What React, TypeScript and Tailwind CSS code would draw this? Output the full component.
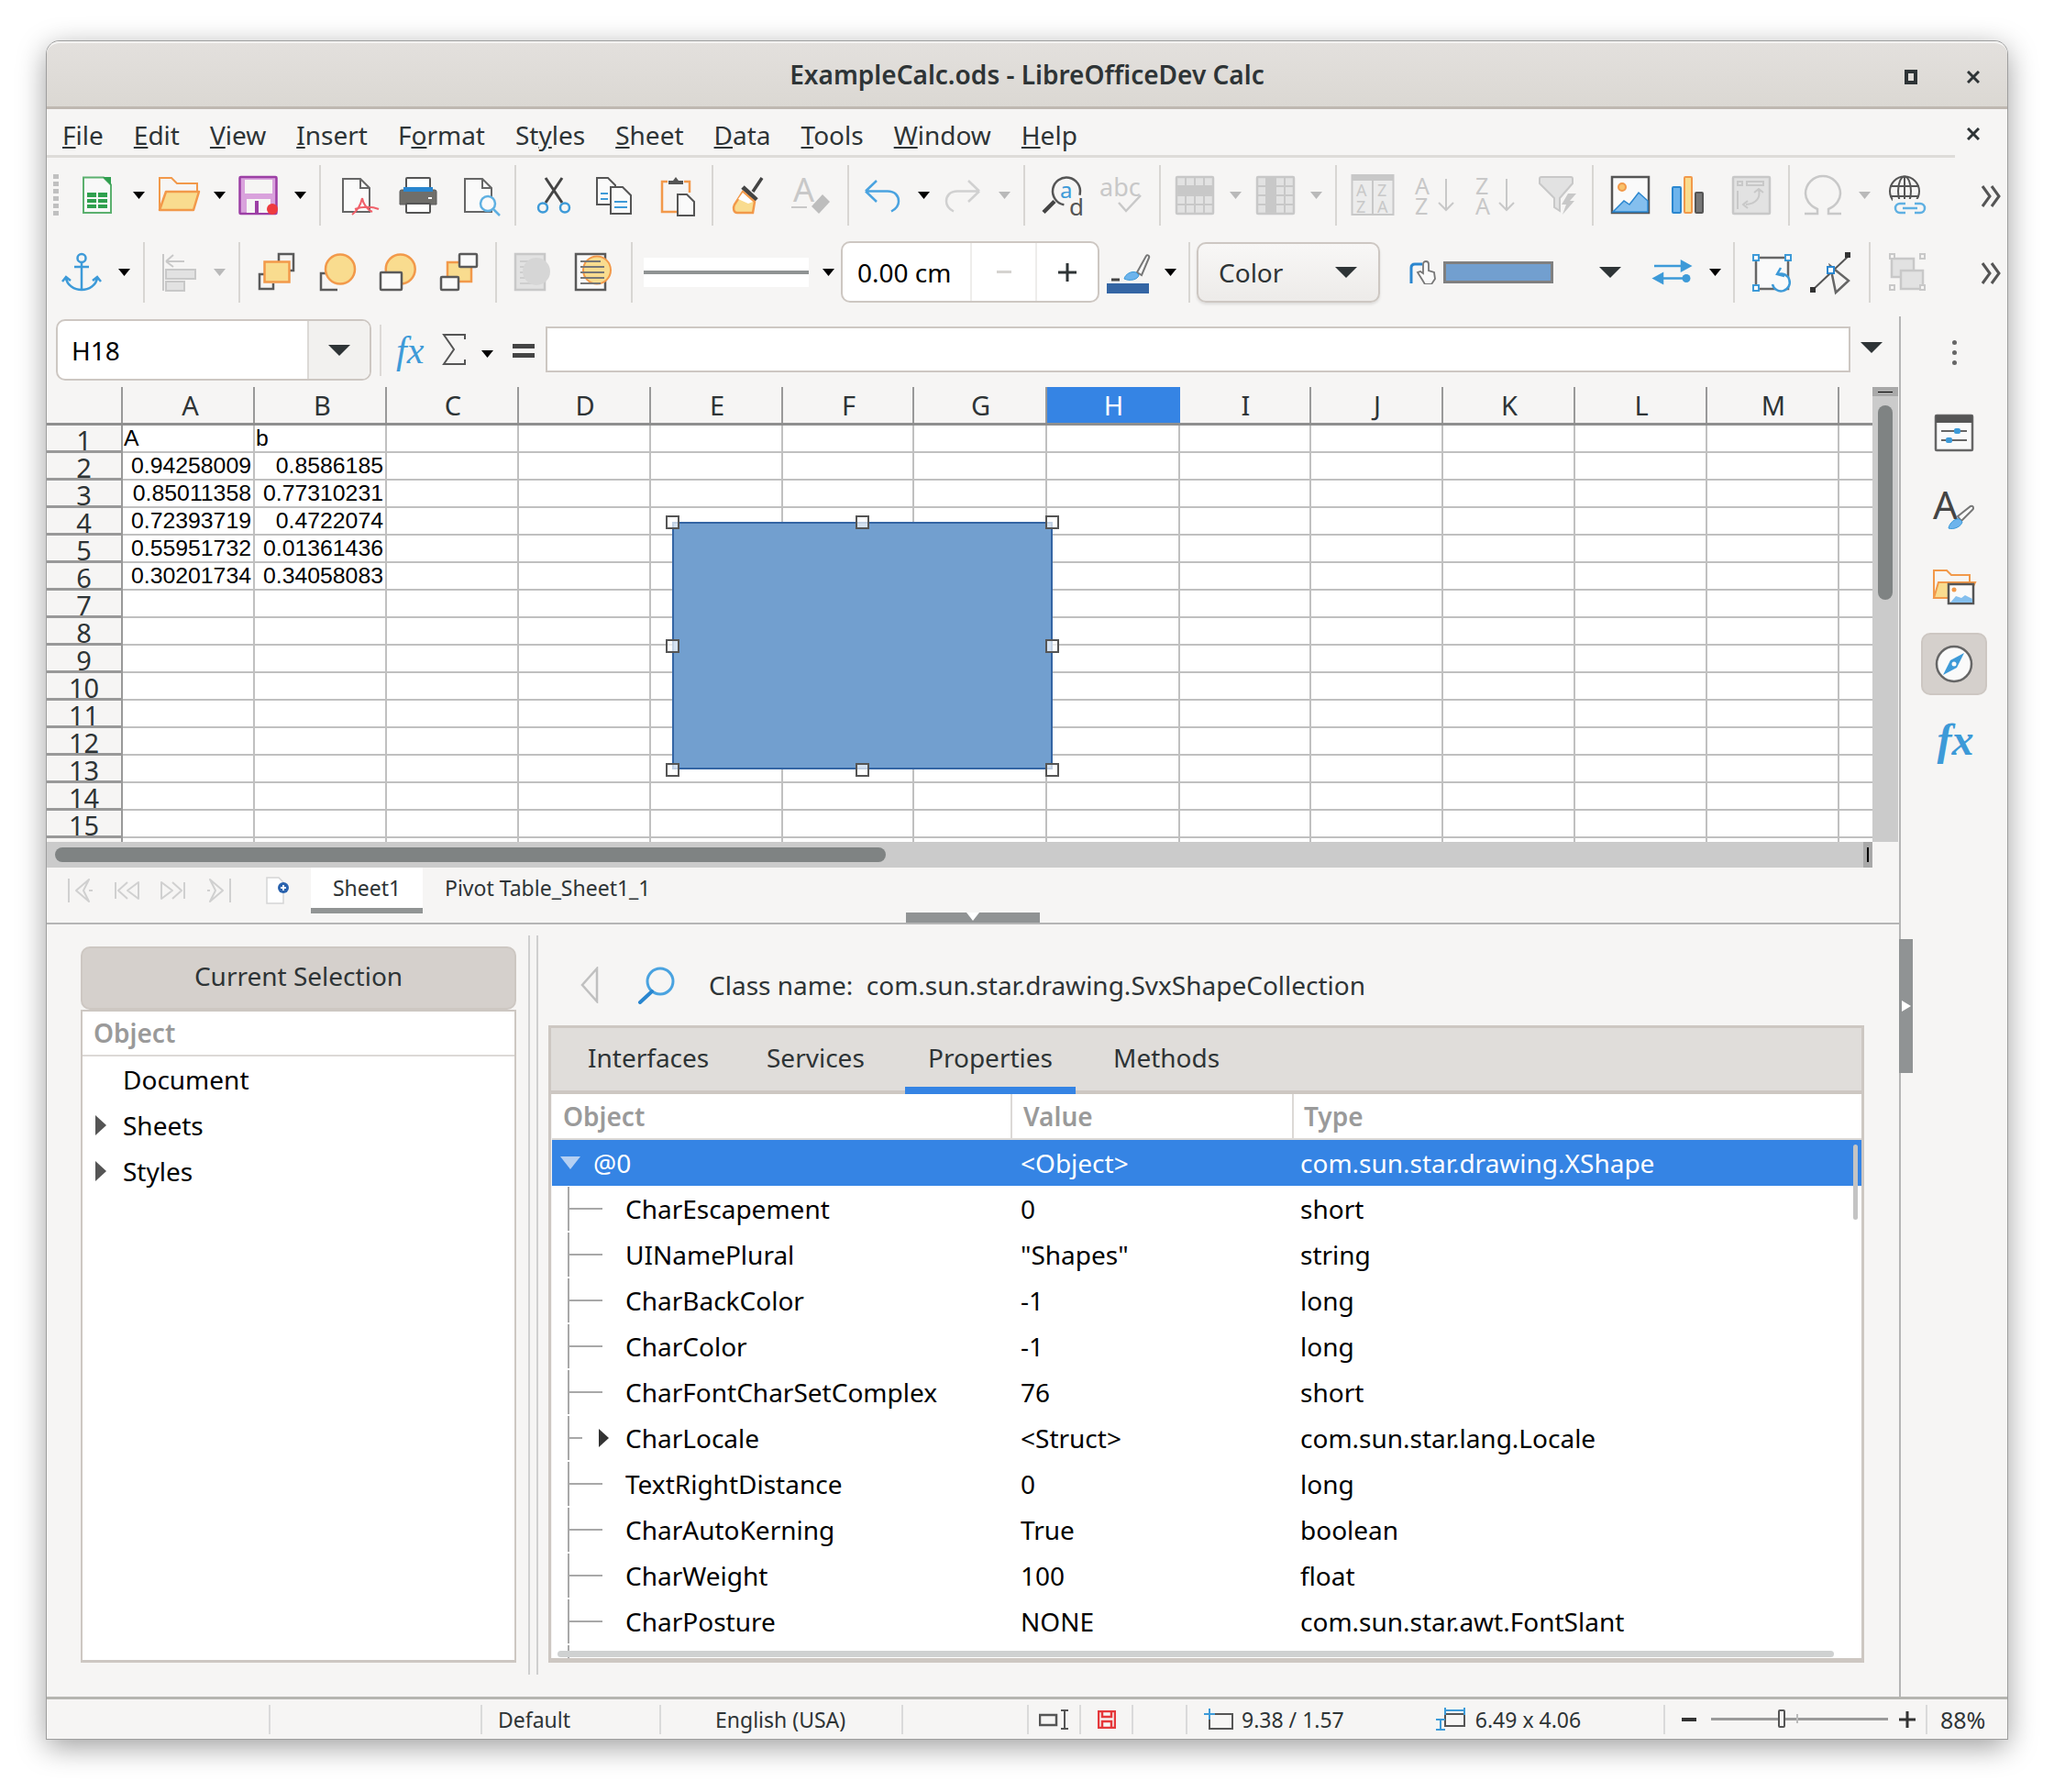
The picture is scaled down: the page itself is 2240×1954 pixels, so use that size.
import React from 'react';

const Ic = ({ children, className = '' }: { children: React.ReactNode; className?: string }) => (
  <svg viewBox="0 0 48 48" fill="none" className={`w-[48px] h-[48px] shrink-0 overflow-visible ${className}`}>
    {children}
  </svg>
);

const BLUE = '#3d9ad8';
const ORANGE = '#f2994a';
const SAND = '#f9dc8f';
const DARK = '#5a5a5a';
const OFF = '#c8c8c8';
const OFF_FILL = '#e2e2e2';

const Cell = ({ className = '', w = 'w-[64px]', children }: { className?: string; w?: string; children?: React.ReactNode }) => (
  <div className={`${w} h-full shrink-0 flex items-center justify-center ${className}`}>{children}</div>
);

const Drop = ({ className = '', grey = false }: { className?: string; grey?: boolean }) => (
  <div className={`w-[22px] h-full shrink-0 flex items-center justify-center ${className}`}>
    <svg viewBox="0 0 13 8" className="w-[13px] h-[8px]">
      <path d="M0 0h13L6.5 8z" fill={grey ? '#b9b9b9' : '#000'} />
    </svg>
  </div>
);

const BigDrop = ({ className = '' }: { className?: string }) => (
  <svg viewBox="0 0 24 12" className={`w-[24px] h-[12px] shrink-0 ${className}`}>
    <path d="M0 0h24L12 12z" fill="#2e3436" />
  </svg>
);

const Sep = ({ className = '' }: { className?: string }) => (
  <div className={`w-[2px] h-[66px] shrink-0 bg-[#d8d6d3] ${className}`} />
);

const More = ({ className = '' }: { className?: string }) => (
  <svg viewBox="0 0 32 32" fill="none" className={`w-[32px] h-[32px] shrink-0 ${className}`}>
    <path d="M7 6l8 11-8 11M17 6l8 11-8 11" stroke="#555" strokeWidth="3" />
  </svg>
);

const PageShape = () => (
  <>
    <path d="M6 6h19l10 10v26H6z" fill="#fafafa" stroke="#666" strokeWidth="2" />
    <path d="M25 6v10h10" stroke="#666" strokeWidth="2" />
  </>
);

const IconCalc = () => (
  <Ic>
    <path d="M9 4.5h22l8 8V43H9z" fill="#f8f8f8" stroke="#5bb06e" strokeWidth="2" />
    <path d="M30 4h9v9z" fill="#2f9e4f" />
    <rect x="13" y="21" width="22" height="17" fill="#2fa04e" />
    <path d="M13 27h22M13 33h22M24 21v17" stroke="#f8f8f8" strokeWidth="2" />
  </Ic>
);
const IconOpen = () => (
  <Ic>
    <path d="M3 40V5h13l6 6h22v10" stroke={ORANGE} strokeWidth="2" fill="#f6f5f4" />
    <path d="M3 40l7-20h36l-6 20z" fill={SAND} stroke={ORANGE} strokeWidth="2.5" strokeLinejoin="round" />
  </Ic>
);
const IconSave = () => (
  <Ic>
    <rect x="3.5" y="4" width="40" height="40" rx="1" fill="#d9a2dc" stroke="#9c3fa5" strokeWidth="2.5" />
    <rect x="9" y="7" width="30" height="15" fill="#f6f5f4" />
    <rect x="11" y="28" width="26" height="15" fill="#f6f5f4" />
    <rect x="20" y="30" width="4" height="13" fill="#9c3fa5" />
    <circle cx="39" cy="39" r="6" fill="#ee3a3f" />
  </Ic>
);
const IconPdf = () => (
  <Ic>
    <PageShape />
    <path d="M27 27c-2 9-7 15-11 18M19 39c8-3 19-3 26 0M27 27c1 7 6 13 11 15" stroke="#f0606a" strokeWidth="2" />
  </Ic>
);
const IconPrint = () => (
  <Ic>
    <rect x="11" y="5" width="26" height="14" rx="1" fill="#fff" stroke="#555" strokeWidth="2" />
    <path d="M4 20a2 2 0 012-2h36a2 2 0 012 2v14H4z" fill="#6f6e6a" stroke="#5a5a5a" />
    <rect x="8" y="15" width="32" height="5" fill="#2a86cf" />
    <rect x="11" y="33" width="26" height="10" rx="1" fill="#fff" stroke="#555" strokeWidth="2" />
    <rect x="35" y="26" width="4" height="2" fill="#fff" />
  </Ic>
);
const IconPreview = () => (
  <Ic>
    <PageShape />
    <circle cx="31" cy="33" r="8" fill="#fafafa" stroke="#5fb0e2" strokeWidth="2.5" />
    <path d="M37 39l7 7" stroke="#5fb0e2" strokeWidth="2.5" />
  </Ic>
);
const IconCut = () => (
  <Ic>
    <path d="M15 32L33 5M33 32L15 5" stroke="#444" strokeWidth="3" />
    <circle cx="12" cy="37.5" r="5" stroke={BLUE} strokeWidth="2.5" />
    <circle cx="36" cy="37.5" r="5" stroke={BLUE} strokeWidth="2.5" />
  </Ic>
);
const IconCopy = () => (
  <Ic>
    <path d="M5 5h12l8 8v21H5z" fill="#fafafa" stroke="#555" strokeWidth="2" />
    <path d="M20 15h13l9 9v20H20z" fill="#fafafa" stroke="#555" strokeWidth="2" />
    <path d="M9 22h8M9 28h8M24 31h14M24 37h14" stroke={BLUE} strokeWidth="2" />
  </Ic>
);
const IconPaste = () => (
  <Ic>
    <path d="M12 9H6v33h16M30 9h6v12" stroke={ORANGE} strokeWidth="2.5" />
    <path d="M13 12V8h5l3-4 3 4h5v4z" fill="#555" />
    <path d="M23 23h10l8 8v15H23z" fill="#fafafa" stroke="#555" strokeWidth="2" />
  </Ic>
);
const IconClone = () => (
  <Ic>
    <path d="M41 5L31 20" stroke="#444" strokeWidth="3.5" />
    <path d="M20 15l15 14" stroke="#444" strokeWidth="5" />
    <path d="M20 20l13 11-2 12H14c-4 0-5-5-3-9z" fill={SAND} stroke={ORANGE} strokeWidth="2.5" />
    <path d="M20 21l11 10-5 2-11-5z" fill="#fff" />
  </Ic>
);
const IconClear = () => (
  <Ic>
    <text x="6" y="31" fontFamily="'Noto Sans', sans-serif" fontSize="36" fill={OFF}>A</text>
    <path d="M4 37h17" stroke={OFF} strokeWidth="2" />
    <path d="M26 36l12-13 8 8-12 13z" fill="#bdbdbd" />
  </Ic>
);
const IconUndo = ({ off = false, flip = false }: { off?: boolean; flip?: boolean }) => (
  <Ic className={flip ? '-scale-x-100' : ''}>
    <path d="M6 19.500H30c8 0 12 5 12 11 0 5-4 9-8 11M6 19.500L18 8M6 19.500L18 31" stroke={off ? '#d0d0d0' : '#4aa3e0'} strokeWidth="2.500" />
  </Ic>
);
const IconFind = () => (
  <Ic>
    <circle cx="28" cy="19.500" r="15" stroke="#555" strokeWidth="2.500" strokeDasharray="72 22" transform="rotate(100 28 19.500)" />
    <path d="M3 42.500L15 30.500" stroke="#444" strokeWidth="4.500" />
    <text x="21" y="27" fontFamily="'Noto Sans', sans-serif" fontSize="24" fill={BLUE}>a</text>
    <text x="31" y="46" fontFamily="'Noto Sans', sans-serif" fontSize="26" fill="#555">d</text>
  </Ic>
);
const IconSpell = () => (
  <Ic>
    <text x="0" y="25" fontFamily="'Noto Sans', sans-serif" fontSize="27" fill={OFF}>abc</text>
    <path d="M21 32l8 9 16-17" stroke={OFF} strokeWidth="2.500" />
  </Ic>
);
const IconGrid = ({ vertical = false }: { vertical?: boolean }) => (
  <Ic>
    <rect x="4" y="4" width="40" height="40" rx="1" fill={OFF_FILL} stroke={OFF} strokeWidth="2.500" />
    {vertical ? <rect x="14" y="4" width="10" height="40" fill={OFF} /> : <rect x="4" y="14" width="40" height="10" fill={OFF} />}
    <path d="M14 4v40M24 4v40M34 4v40M4 14h40M4 24h40M4 34h40" stroke={OFF} strokeWidth="2" />
  </Ic>
);
const IconAz = () => (
  <Ic>
    <rect x="1.500" y="2" width="45" height="43" fill="#ececec" stroke={OFF} strokeWidth="2" />
    <rect x="1.500" y="2" width="45" height="6" fill={OFF} />
    <path d="M24 8v37" stroke={OFF} strokeWidth="2" />
    <text x="6" y="25" fontFamily="'Noto Sans', sans-serif" fontSize="18" fill={OFF}>A</text>
    <text x="6" y="43" fontFamily="'Noto Sans', sans-serif" fontSize="18" fill={OFF}>Z</text>
    <text x="29" y="25" fontFamily="'Noto Sans', sans-serif" fontSize="18" fill={OFF}>Z</text>
    <text x="29" y="43" fontFamily="'Noto Sans', sans-serif" fontSize="18" fill={OFF}>A</text>
  </Ic>
);
const IconSort = ({ top, bottom }: { top: string; bottom: string }) => (
  <Ic>
    <text x="1" y="23" fontFamily="'Noto Sans', sans-serif" fontSize="25" fill={OFF}>{top}</text>
    <text x="1" y="45" fontFamily="'Noto Sans', sans-serif" fontSize="25" fill={OFF}>{bottom}</text>
    <path d="M35 6v34M27 32l8 8 8-8" stroke={OFF} strokeWidth="2" />
  </Ic>
);
const IconFilter = () => (
  <Ic>
    <path d="M5 6a2 2 0 012-2h32a2 2 0 012 2v5L27 27v14l-6-4V27L5 11z" fill={OFF_FILL} stroke={OFF} strokeWidth="2" />
    <path d="M36 22h9l-7 8h5L30 45l4-11h-5z" fill={OFF} />
  </Ic>
);
const IconImage = () => (
  <Ic>
    <rect x="5" y="4" width="40" height="39" fill="#fafafa" stroke="#555" strokeWidth="2.500" />
    <circle cx="16" cy="15" r="4" fill="#f9c26b" stroke={ORANGE} strokeWidth="2" />
    <path d="M6 42l12-12 6 4 10-13 10 9v12z" fill="#84bfee" stroke="#2a86cf" strokeWidth="1.500" />
  </Ic>
);
const IconChart = () => (
  <Ic>
    <rect x="5" y="15" width="9" height="28" rx="1" fill="#6db4ec" stroke="#2a86cf" strokeWidth="2" />
    <rect x="18" y="4" width="8" height="39" rx="1" fill={SAND} stroke={ORANGE} strokeWidth="2" />
    <rect x="30" y="21" width="8" height="22" rx="1" fill="#777" stroke="#555" strokeWidth="2" />
  </Ic>
);
const IconPivot = () => (
  <Ic>
    <rect x="4" y="4" width="40" height="40" rx="1" fill={OFF_FILL} stroke={OFF} strokeWidth="2.500" />
    <path d="M9 9h5v4H9zM19 9h18v4H19zM9 19v20M32 18c2 8-2 15-14 16M27 21l5-4 5 4M20 30l-5 4 5 4" stroke={OFF} strokeWidth="2" />
  </Ic>
);
const IconOmega = () => (
  <Ic>
    <path d="M4 44h14v-5C9 35 5 28 5 22a19 19 0 0138 0c0 6-4 13-13 17v5h14" stroke={OFF} strokeWidth="2.500" />
  </Ic>
);
const IconLink = () => (
  <Ic>
    <circle cx="20" cy="19.500" r="16" stroke="#555" strokeWidth="2" />
    <ellipse cx="20" cy="19.500" rx="7" ry="16" stroke="#555" strokeWidth="2" />
    <path d="M4 14h32M4 25h32M20 3v30" stroke="#555" strokeWidth="2" />
    <rect x="7" y="28" width="40" height="18" fill="#f6f5f4" />
    <path d="M21 33h-6a5 5 0 000 10h6M31 33h6a5 5 0 010 10h-6M18 38h16" stroke="#5fb0e2" strokeWidth="2.500" />
  </Ic>
);
const IconAnchor = () => (
  <Ic>
    <circle cx="24" cy="8.500" r="4.500" stroke={BLUE} strokeWidth="2.500" />
    <path d="M24 13v30M16 18h16M7 30c1 8 9 13 17 13s16-5 17-13M3 34l4-5 5 4M45 34l-4-5-5 4" stroke={BLUE} strokeWidth="2.500" />
  </Ic>
);
const IconAlign = () => (
  <Ic>
    <path d="M7 4v40M10 12h20M10 12l8-7M10 12l8 6" stroke={OFF} strokeWidth="2" />
    <rect x="10" y="21" width="32" height="10" fill={OFF_FILL} stroke={OFF} strokeWidth="2" />
    <rect x="10" y="34" width="20" height="10" fill={OFF_FILL} stroke={OFF} strokeWidth="2" />
  </Ic>
);
const IconArrangeA = () => (
  <Ic>
    <path d="M26 12V4h16v18h-4M20 36v6H5V26h5" stroke={DARK} strokeWidth="2.500" />
    <rect x="10.500" y="12.500" width="27" height="22" fill={SAND} stroke={ORANGE} strokeWidth="2.500" />
  </Ic>
);
const IconArrangeB = () => (
  <Ic>
    <path d="M24 43H6V25h8" stroke={DARK} strokeWidth="2.500" />
    <circle cx="27" cy="20.500" r="16" fill={SAND} stroke={ORANGE} strokeWidth="2.500" />
  </Ic>
);
const IconArrangeC = () => (
  <Ic>
    <circle cx="26.700" cy="20.500" r="16" fill={SAND} stroke={ORANGE} strokeWidth="2.500" />
    <rect x="5" y="24" width="23" height="19" rx="1" fill="#fafafa" stroke={DARK} strokeWidth="2.500" />
  </Ic>
);
const IconArrangeD = () => (
  <Ic>
    <rect x="12" y="13" width="26" height="21" fill={SAND} stroke={ORANGE} strokeWidth="2.500" />
    <rect x="25" y="4" width="19" height="14" rx="1" fill="#fafafa" stroke={DARK} strokeWidth="2.500" />
    <rect x="5" y="29" width="19" height="14" rx="1" fill="#fafafa" stroke={DARK} strokeWidth="2.500" />
  </Ic>
);
const IconWrapOff = () => (
  <Ic>
    <rect x="5" y="4" width="32" height="39" fill={OFF_FILL} stroke={OFF} strokeWidth="2.500" />
    <path d="M10 12h16M10 18h16M10 24h16M10 30h16M10 36h16" stroke={OFF} strokeWidth="1.500" />
    <circle cx="28" cy="23" r="15" fill="#d6d6d6" />
  </Ic>
);
const IconWrapOn = () => (
  <Ic>
    <rect x="5" y="4" width="32" height="39" fill="#fafafa" stroke={DARK} strokeWidth="2.500" />
    <circle cx="28" cy="21.500" r="15" fill={SAND} stroke={ORANGE} strokeWidth="2" />
    <path d="M10 12h22M10 18h26M10 24h26M10 30h26M10 36h22" stroke="#777" strokeWidth="2" />
  </Ic>
);
const IconLineColor = () => (
  <Ic>
    <path d="M34 24L44 6c1-2 4 0 3 2L39 27z" fill="#fafafa" stroke="#777" strokeWidth="2" />
    <path d="M20 31c1-5 8-9 13-7l3 3c-1 5-10 7-16 4z" fill="#6db4ec" stroke={BLUE} />
    <path d="M6 32h9" stroke="#444" strokeWidth="3" />
    <rect x="1" y="36" width="46" height="11" fill="#3465a4" />
  </Ic>
);
const IconHand = () => (
  <svg viewBox="0 0 30 26" fill="none" className="w-[30px] h-[26px] shrink-0">
    <path d="M2 25V8c0-3 2-4 4-4h8" stroke="#2a86cf" strokeWidth="3" />
    <path d="M14 21L9 13l3-1 3 2V4c0-4 6-4 6 0v7l6 2 1 7-4 6H17z" fill="#fafafa" stroke="#777" strokeWidth="1.800" />
  </svg>
);
const IconArrows = () => (
  <Ic>
    <path d="M4 17h33M43 17l-9-5v10zM43 30.500H10M4 30.500l9-5v10z" stroke={BLUE} strokeWidth="2.500" fill={BLUE} />
    <circle cx="39" cy="30.500" r="4.500" fill={BLUE} />
  </Ic>
);
const IconRotate = () => (
  <Ic>
    <rect x="6" y="8" width="35" height="34" fill="#fafafa" stroke="#666" strokeWidth="2.500" />
    <rect x="3" y="5" width="6" height="6" fill="#fff" stroke={BLUE} strokeWidth="2" />
    <rect x="38" y="5" width="6" height="6" fill="#fff" stroke={BLUE} strokeWidth="2" />
    <rect x="3" y="38" width="6" height="6" fill="#fff" stroke={BLUE} strokeWidth="2" />
    <path d="M30 26a9.500 9.500 0 11-6 11M33 19l-4 7 8 2" stroke={BLUE} strokeWidth="2.500" fill="#fafafa" />
  </Ic>
);
const IconPoints = () => (
  <Ic>
    <path d="M4 43L43 6" stroke="#555" strokeWidth="2" />
    <path d="M23 24l6 29 14-13z" transform="translate(0 -7)" stroke="#666" strokeWidth="2.500" fill="#f6f5f4" />
    <rect x="1" y="40" width="6" height="6" fill="#333" />
    <rect x="39" y="2" width="6" height="6" fill="#333" />
    <rect x="20" y="18" width="7" height="7" fill="#fff" stroke="#2a86cf" strokeWidth="2" />
  </Ic>
);
const IconGroup = () => (
  <Ic>
    <rect x="7" y="9" width="24" height="20" fill={OFF_FILL} stroke={OFF} strokeWidth="2.500" />
    <rect x="17" y="22" width="24" height="20" fill={OFF_FILL} stroke={OFF} strokeWidth="2.500" />
    <path d="M5 4h5v5H5zM38 4h5v5h-5zM5 38h5v5H5zM38 38h5v5h-5z" stroke={OFF} strokeWidth="2" fill="#f6f5f4" />
  </Ic>
);

const Toolbar1 = () => (
  <div className="h-[81px] flex items-center">
    <div className="w-[20px] h-[46px] shrink-0 pl-[7px] flex flex-col justify-between">
      {[0, 1, 2, 3, 4, 5].map((i) => <div key={i} className="w-[6px] h-[5px] bg-[#c0c0c0]" />)}
    </div>
    <Cell className="ml-[3px]"><IconCalc /></Cell>
    <Drop className="ml-[2px]" />
    <Cell className="ml-[1px]"><IconOpen /></Cell>
    <Drop className="ml-[1px]" />
    <Cell><IconSave /></Cell>
    <Drop className="ml-[2px]" />
    <Sep className="ml-[10px]" />
    <Cell className="ml-[10px]"><IconPdf /></Cell>
    <Cell><IconPrint /></Cell>
    <Cell className="ml-[5px]"><IconPreview /></Cell>
    <Sep className="ml-[4px]" />
    <Cell className="ml-[9px]"><IconCut /></Cell>
    <Cell className="ml-[2px]"><IconCopy /></Cell>
    <Cell className="ml-[6px]"><IconPaste /></Cell>
    <Sep className="ml-[4px]" />
    <Cell className="ml-[4px]"><IconClone /></Cell>
    <Cell className="ml-[5px]"><IconClear /></Cell>
    <Sep className="ml-[9px]" />
    <Cell className="ml-[4px]"><IconUndo /></Cell>
    <Drop className="ml-[2px]" />
    <Cell><IconUndo off flip /></Cell>
    <Drop className="ml-[2px]" grey />
    <Sep className="ml-[10px]" />
    <Cell className="ml-[9px]"><IconFind /></Cell>
    <Cell><IconSpell /></Cell>
    <Sep className="ml-[9px]" />
    <Cell className="ml-[5px]"><IconGrid /></Cell>
    <Drop className="ml-[1px]" grey />
    <Cell className="ml-[1px]"><IconGrid vertical /></Cell>
    <Drop className="ml-[1px]" grey />
    <Sep className="ml-[10px]" />
    <Cell className="ml-[7px]"><IconAz /></Cell>
    <Cell className="ml-[5px]"><IconSort top="A" bottom="Z" /></Cell>
    <Cell className="ml-[2px]"><IconSort top="Z" bottom="A" /></Cell>
    <Cell className="ml-[2px]"><IconFilter /></Cell>
    <Sep className="ml-[6px]" />
    <Cell className="ml-[7px]"><IconImage /></Cell>
    <Cell className="ml-[2px]"><IconChart /></Cell>
    <Cell className="ml-[3px]"><IconPivot /></Cell>
    <Sep className="ml-[8px]" />
    <Cell className="ml-[4px]"><IconOmega /></Cell>
    <Drop className="ml-[2px]" grey />
    <Cell className="ml-[5px]"><IconLink /></Cell>
    <More className="ml-[42px]" />
  </div>
);

const Toolbar2 = () => (
  <div className="h-[92px] pb-[5px] flex items-center">
    <Cell className="ml-[6px]"><IconAnchor /></Cell>
    <Drop className="ml-[3px]" />
    <Sep className="ml-[10px]" />
    <Cell className="ml-[5px]"><IconAlign /></Cell>
    <Drop className="ml-[1px]" grey />
    <Sep className="ml-[10px]" />
    <Cell className="ml-[8px]"><IconArrangeA /></Cell>
    <Cell className="ml-[2px]"><IconArrangeB /></Cell>
    <Cell className="ml-[2px]"><IconArrangeC /></Cell>
    <Cell className="ml-[2px]"><IconArrangeD /></Cell>
    <Sep className="ml-[8px]" />
    <Cell className="ml-[7px]"><IconWrapOff /></Cell>
    <Cell className="ml-[2px]"><IconWrapOn /></Cell>
    <Sep className="ml-[9px]" />
    <div className="ml-[12px] w-[180px] h-[32px] shrink-0 bg-white flex items-center">
      <div className="w-full h-[4px] bg-[#8f9393]" />
    </div>
    <Drop className="ml-[10px]" />
    <div className="ml-[3px] w-[282px] h-[67px] shrink-0 flex items-center bg-white border-2 border-[#cdc7c2] rounded-[10px] text-[28px] text-black">
      <div className="w-[139px] pl-[16px] whitespace-nowrap">0.00 cm</div>
      <div className="w-[71px] h-full flex items-center justify-center border-l-2 border-[#eeedeb] text-[#d5d3d0]">
        <div className="w-[16px] h-[3px] bg-[#d5d3d0]" />
      </div>
      <div className="flex-1 h-full flex items-center justify-center border-l-2 border-[#eeedeb]">
        <svg viewBox="0 0 20 20" className="w-[20px] h-[20px]"><path d="M10 0v20M0 10h20" stroke="#2e3436" strokeWidth="3" /></svg>
      </div>
    </div>
    <Cell className="ml-[7px]" w="w-[48px]"><IconLineColor /></Cell>
    <Drop className="ml-[11px]" />
    <Sep className="ml-[9px]" />
    <div className="ml-[7px] w-[200px] h-[66px] shrink-0 flex items-center justify-between pl-[22px] pr-[23px] rounded-[10px] border-2 border-[#cdc7c2] bg-gradient-to-b from-[#f8f7f6] to-[#edebe9] shadow-[0_2px_3px_rgba(0,0,0,0.1)] text-[28px] text-[#2e3436]">
      <span>Color</span>
      <BigDrop />
    </div>
    <Cell className="ml-[32px]" w="w-[30px]"><IconHand /></Cell>
    <div className="ml-[7px] w-[120px] h-[24px] shrink-0 bg-[#729fcf] border-[3px] border-[#808080]" />
    <Cell className="ml-[50px]" w="w-[24px]"><BigDrop /></Cell>
    <Cell className="ml-[24px]"><IconArrows /></Cell>
    <Drop className="ml-[3px]" />
    <Sep className="ml-[9px]" />
    <Cell className="ml-[9px]"><IconRotate /></Cell>
    <Cell><IconPoints /></Cell>
    <Sep className="ml-[9px]" />
    <Cell className="ml-[8px]"><IconGroup /></Cell>
    <More className="ml-[43px]" />
  </div>
);

const menus: [string, string, string][] = [
  ['', 'F', 'ile'], ['', 'E', 'dit'], ['', 'V', 'iew'], ['', 'I', 'nsert'], ['F', 'o', 'rmat'], ['St', 'y', 'les'],
  ['', 'S', 'heet'], ['', 'D', 'ata'], ['', 'T', 'ools'], ['', 'W', 'indow'], ['', 'H', 'elp'],
];

const CloseX = ({ className = '' }: { className?: string }) => (
  <svg viewBox="0 0 14 14" className={`w-[14px] h-[14px] shrink-0 ${className}`}>
    <path d="M1 1l12 12M13 1L1 13" stroke="#2e3436" strokeWidth="3" />
  </svg>
);

const FormulaBar = () => (
  <div className="h-[77px] shrink-0 flex items-start pt-[3px]">
    <div className="ml-[10px] w-[344px] h-[67px] shrink-0 flex bg-white border-2 border-[#cdc7c2] rounded-[10px] overflow-hidden">
      <div className="w-[272px] flex items-center pl-[15px] text-[28px] text-black">H18</div>
      <div className="flex-1 flex items-center justify-center bg-[#f2f1ef] border-l-2 border-[#dcd9d6]">
        <BigDrop />
      </div>
    </div>
    <div className="ml-[9px] mt-[6px] w-[2px] h-[56px] bg-[#dcd9d6]" />
    <div className="ml-[16px] mt-[6px] w-[34px] h-[56px] flex items-center font-['Liberation_Serif',serif] italic text-[42px] text-[#3d9ad8]">fx</div>
    <svg viewBox="0 0 26 34" fill="none" className="ml-[16px] mt-[15px] w-[26px] h-[36px]">
      <path d="M25 6V1H2l11 16L2 33h23v-5" stroke="#555" strokeWidth="2" />
    </svg>
    <svg viewBox="0 0 13 8" className="ml-[17px] mt-[34px] w-[13px] h-[8px]"><path d="M0 0h13L6.500 8z" fill="#000" /></svg>
    <div className="ml-[21px] mt-[27px] w-[24px] h-[15px] flex flex-col justify-between">
      <div className="h-[5px] bg-[#444]" />
      <div className="h-[5px] bg-[#444]" />
    </div>
    <div className="ml-[12px] mt-[8px] w-[1423px] h-[50px] bg-white border-2 border-[#cdc7c2]" />
    <BigDrop className="ml-[11px] mt-[25px]" />
  </div>
);

const columns: [string, string][] = [
  ['A', 'w-[144px]'], ['B', 'w-[144px]'], ['C', 'w-[144px]'], ['D', 'w-[144px]'], ['E', 'w-[144px]'], ['F', 'w-[143px]'],
  ['G', 'w-[145px]'], ['H', 'w-[145px]'], ['I', 'w-[143px]'], ['J', 'w-[144px]'], ['K', 'w-[144px]'], ['L', 'w-[144px]'], ['M', 'w-[144px]'],
];

const values: Record<number, [string, string]> = {
  1: ['A', 'b'],
  2: ['0.94258009', '0.8586185'],
  3: ['0.85011358', '0.77310231'],
  4: ['0.72393719', '0.4722074'],
  5: ['0.55951732', '0.01361436'],
  6: ['0.30201734', '0.34058083'],
};

const Handle = ({ className }: { className: string }) => (
  <div className={`absolute w-[15px] h-[15px] -ml-[7px] -mt-[7px] bg-white/70 border-2 border-[#555] ${className}`} />
);

const Sheet = () => (
  <div className="flex h-[496px] shrink-0">
    <div className="w-[1991px] shrink-0 flex flex-col">
      {/* column header */}
      <div className="flex h-[42px] shrink-0 border-b-[3px] border-[#8f8f8f] text-[29px] text-[#2e3436]">
        <div className="w-[83px] shrink-0 border-r-2 border-[#999]" />
        {columns.map(([name, w]) => (
          <div
            key={name}
            className={`${w} shrink-0 flex items-center justify-center border-r-2 ${name === 'A' || name === 'B' ? 'pl-[5px]' : 'pl-[2px]'} ${name === 'H' ? 'bg-[#3584e4] text-white border-[#3584e4]' : 'border-[#999]'}`}
          >
            {name}
          </div>
        ))}
        <div className="flex-1" />
      </div>
      {/* rows */}
      <div className="relative flex-1 overflow-hidden">
        {Array.from({ length: 16 }, (_, i) => i + 1).map((row) => (
          <div key={row} className="flex h-[30px]">
            <div className="w-[83px] h-[30px] shrink-0 flex items-end justify-center border-r-2 border-b-[3px] border-[#999] bg-[#f6f5f4] text-[29px] leading-[22px] text-[#2e3436]">
              {row < 16 ? row : ''}
            </div>
            {columns.map(([name, w], i) => {
              const cell = i < 2 ? values[row]?.[i] : undefined;
              return (
                <div
                  key={name}
                  className={`${w} h-[30px] shrink-0 flex items-center bg-white border-r-2 border-b-2 border-[#c0c0c0] font-['Liberation_Sans',sans-serif] text-[24.8px] leading-[28px] text-black ${row === 1 ? 'justify-start pl-[1px]' : 'justify-end pr-[2px]'}`}
                >
                  {cell}
                </div>
              );
            })}
            <div className="flex-1 h-[30px] bg-white border-b-2 border-[#c0c0c0]" />
          </div>
        ))}
        {/* drawing shape on the sheet */}
        <div className="absolute left-[682px] top-[105px] w-[415px] h-[270px] bg-[#729fcf] border-2 border-[#3465a4]" />
        <Handle className="left-[682px] top-[105px]" />
        <Handle className="left-[889px] top-[105px]" />
        <Handle className="left-[1096px] top-[105px]" />
        <Handle className="left-[682px] top-[240px]" />
        <Handle className="left-[1096px] top-[240px]" />
        <Handle className="left-[682px] top-[375px]" />
        <Handle className="left-[889px] top-[375px]" />
        <Handle className="left-[1096px] top-[375px]" />
      </div>
    </div>
    {/* vertical scrollbar */}
    <div className="w-[28px] shrink-0 bg-[#cbcbcb] flex flex-col items-center">
      <div className="w-full h-[10px] bg-[#a9a9a9] flex items-center justify-center">
        <div className="w-[16px] h-[1px] bg-black" />
      </div>
      <div className="mt-[10px] w-[16px] h-[212px] rounded-full bg-[#7f8383]" />
    </div>
  </div>
);

const HScroll = () => (
  <div className="flex h-[28px] shrink-0">
    <div className="w-[1981px] shrink-0 bg-[#cbcbcb] pl-[9px] flex items-center">
      <div className="w-[906px] h-[16px] rounded-full bg-[#7f8383]" />
    </div>
    <div className="w-[10px] shrink-0 bg-[#a9a9a9] flex items-center justify-center">
      <div className="w-[2px] h-[16px] bg-black" />
    </div>
  </div>
);

const NavIcon = ({ d, className = '' }: { d: string; className?: string }) => (
  <svg viewBox="0 0 30 30" fill="none" className={`w-[30px] h-[30px] shrink-0 ${className}`}>
    <path d={d} stroke="#d0d0d0" strokeWidth="2" strokeLinejoin="round" />
  </svg>
);

const SheetTabs = () => (
  <div className="h-[60px] shrink-0 flex items-start text-[23px] text-[#2e3436]">
    <NavIcon className="ml-[22px] mt-[10px]" d="M2 2v26M24 3L10 15l14 12 -6-12zM24 15h4" />
    <NavIcon className="ml-[20px] mt-[10px]" d="M3 6v18M28 6L16 15l12 9zM16 6L6 15l10 9" />
    <NavIcon className="ml-[21px] mt-[10px]" d="M27 6v18M2 6l12 9-12 9zM14 6l10 9-10 9" />
    <NavIcon className="ml-[20px] mt-[10px]" d="M27 2v26M5 3l14 12L5 27l6-12zM2 15h3" />
    <svg viewBox="0 0 28 30" fill="none" className="ml-[35px] mt-[10px] w-[28px] h-[30px] shrink-0">
      <path d="M2 1h13l5 5v23H2z" fill="#fff" stroke="#d5d5d5" strokeWidth="1.500" />
      <circle cx="20" cy="12" r="6" fill="#2a62ad" />
      <path d="M20 9v6M17 12h6" stroke="#fff" strokeWidth="2" />
    </svg>
    <div className="ml-[22px] w-[122px] h-[50px] shrink-0 bg-white border-b-[6px] border-[#919494] flex items-center justify-center">Sheet1</div>
    <div className="ml-[24px] h-[44px] flex items-center whitespace-nowrap">Pivot Table_Sheet1_1</div>
  </div>
);

const treeRows: { name: string; value: string; type: string; expand?: boolean }[] = [
  { name: 'CharEscapement', value: '0', type: 'short' },
  { name: 'UINamePlural', value: '"Shapes"', type: 'string' },
  { name: 'CharBackColor', value: '-1', type: 'long' },
  { name: 'CharColor', value: '-1', type: 'long' },
  { name: 'CharFontCharSetComplex', value: '76', type: 'short' },
  { name: 'CharLocale', value: '<Struct>', type: 'com.sun.star.lang.Locale', expand: true },
  { name: 'TextRightDistance', value: '0', type: 'long' },
  { name: 'CharAutoKerning', value: 'True', type: 'boolean' },
  { name: 'CharWeight', value: '100', type: 'float' },
  { name: 'CharPosture', value: 'NONE', type: 'com.sun.star.awt.FontSlant' },
  { name: 'CharHeightUD', value: '200', type: 'long' },
];

const Arrow = () => (
  <svg viewBox="0 0 12 22" className="w-[12px] h-[22px] shrink-0"><path d="M0 0l12 11L0 22z" fill="#555" /></svg>
);

const ObjectPanel = () => (
  <div className="w-[475px] shrink-0 flex flex-col pt-[24px]">
    <div className="h-[69px] shrink-0 flex items-center justify-center pb-[5px] rounded-[10px] bg-[#d5d0cc] border-2 border-[#cdc7c2] text-[#2e3436]">
      Current Selection
    </div>
    <div className="h-[712px] shrink-0 bg-white border-x-2 border-t-2 border-b-[3px] border-[#cdc7c2] text-black">
      <div className="h-[49px] flex items-center pl-[12px] pb-[2px] border-b-2 border-[#dcd9d6] font-semibold text-[#9a9a9a]">Object</div>
      <div className="h-[50px] flex items-center pl-[44px]">Document</div>
      <div className="h-[50px] flex items-center pl-[14px] gap-[18px]"><Arrow />Sheets</div>
      <div className="h-[50px] flex items-center pl-[14px] gap-[18px]"><Arrow />Styles</div>
    </div>
  </div>
);

const Inspector = () => (
  <div className="w-[1435px] shrink-0 flex flex-col">
    <div className="h-[110px] shrink-0 flex items-center pt-[21px] text-[#2e3436]">
      <svg viewBox="0 0 20 40" fill="none" className="ml-[35px] w-[20px] h-[40px] shrink-0">
        <path d="M18 2L2 20l16 18z" stroke="#c0c0c0" strokeWidth="2.500" fill="#f6f5f4" />
      </svg>
      <svg viewBox="0 0 42 42" fill="none" className="ml-[42px] w-[42px] h-[42px] shrink-0">
        <circle cx="25" cy="17" r="14" stroke="#4aa3e0" strokeWidth="3" />
        <path d="M16 28L3 40" stroke="#2a86cf" strokeWidth="4" strokeLinecap="round" />
      </svg>
      <div className="ml-[36px] whitespace-pre">Class name:  com.sun.star.drawing.SvxShapeCollection</div>
    </div>
    <div className="relative h-[695px] shrink-0 flex flex-col border-x-[3px] border-t-[3px] border-b-[5px] border-[#cdc7c2] overflow-hidden">
      <div className="h-[72px] shrink-0 flex bg-[#e0ddda] border-b-[4px] border-[#cdc7c2] text-[#2e3436] pl-[40px]">
        <div className="flex items-center pb-[4px] w-[195px]">Interfaces</div>
        <div className="flex items-center pb-[4px] w-[151px]">Services</div>
        <div className="relative flex items-center justify-center pb-[4px] w-[186px]">
          Properties
          <div className="absolute left-0 right-0 bottom-[-4px] h-[8px] bg-[#3584e4]" />
        </div>
        <div className="flex items-center pb-[4px] pl-[41px]">Methods</div>
      </div>
      <div className="flex-1 overflow-hidden bg-white ml-[1px] text-black">
        <div className="h-[50px] grid grid-cols-[500px_307px_1fr] border-b-2 border-[#dcd9d6] font-semibold text-[#9a9a9a]">
          <div className="flex items-center pl-[12px]">Object</div>
          <div className="flex items-center pl-[12px] border-l-2 border-[#dcd9d6]">Value</div>
          <div className="flex items-center pl-[11px] border-l-2 border-[#dcd9d6]">Type</div>
        </div>
        <div className="h-[50px] grid grid-cols-[500px_307px_1fr] bg-[#3584e4] text-white">
          <div className="flex items-center pl-[9px]">
            <svg viewBox="0 0 22 14" className="w-[22px] h-[14px] shrink-0"><path d="M0 0h22L11 14z" fill="#b5d0f3" /></svg>
            <span className="ml-[14px]">@0</span>
          </div>
          <div className="flex items-center pl-[11px]">{'<Object>'}</div>
          <div className="flex items-center pl-[9px]">com.sun.star.drawing.XShape</div>
        </div>
        {treeRows.map((r) => (
          <div key={r.name} className="h-[50px] grid grid-cols-[500px_307px_1fr]">
            <div className="relative flex items-center pl-[19px]">
              <div className="absolute left-[17px] top-[1px] bottom-[1px] w-[2px] bg-[#a8a8a8]" />
              {r.expand ? (
                <>
                  <div className="w-[14px] h-[2px] bg-[#a8a8a8] shrink-0" />
                  <svg viewBox="0 0 12 22" className="ml-[18px] mr-[18px] w-[11px] h-[22px] shrink-0"><path d="M0 0l12 11L0 22z" fill="#333" /></svg>
                </>
              ) : (
                <div className="w-[36px] h-[2px] bg-[#a8a8a8] mr-[25px] shrink-0" />
              )}
              <span className="whitespace-nowrap">{r.name}</span>
            </div>
            <div className="flex items-center pl-[11px]">{r.value}</div>
            <div className="flex items-center pl-[9px]">{r.type}</div>
          </div>
        ))}
      </div>
      {/* overlay scrollbars of the tree */}
      <div className="absolute right-[4px] top-[127px] w-[5px] h-[82px] rounded-full bg-[#c4c4c4]" />
      <div className="absolute left-[7px] bottom-[1px] w-[1392px] h-[7px] rounded-full bg-[#cfd1d1]" />
    </div>
  </div>
);

const SideButton = ({ children, active = false, className = '' }: { children: React.ReactNode; active?: boolean; className?: string }) => (
  <div className={`w-[72px] h-[68px] flex items-center justify-center rounded-[10px] ${active ? 'bg-[#d5d0cc] border-2 border-[#cdc7c2]' : ''} ${className}`}>
    {children}
  </div>
);

const Sidebar = () => (
  <div className="relative flex-1 border-l-2 border-[#b5b5b5] flex flex-col items-center pt-[6px]">
    <div className="h-[66px] flex flex-col justify-center gap-[6px] items-center">
      <div className="w-[5px] h-[5px] rounded-full bg-[#666]" />
      <div className="w-[5px] h-[5px] rounded-full bg-[#666]" />
      <div className="w-[5px] h-[5px] rounded-full bg-[#666]" />
    </div>
    <div className="mt-[21px] flex flex-col items-center gap-[17px]">
      <SideButton>
        <Ic>
          <rect x="4" y="5" width="40" height="38" rx="1" fill="#fafafa" stroke="#666" strokeWidth="2.500" />
          <rect x="4" y="5" width="40" height="8" fill="#555" />
          <path d="M10 22h28M10 32h28" stroke="#666" strokeWidth="2" />
          <rect x="24" y="19" width="7" height="6" rx="2" fill={BLUE} />
          <rect x="15" y="29" width="7" height="6" rx="2" fill={BLUE} />
        </Ic>
      </SideButton>
      <SideButton>
        <Ic>
          <text x="1" y="33" fontFamily="'Noto Sans', sans-serif" fontSize="42" fill="#444">A</text>
          <path d="M28 30L42 19c3-1 4 2 2 4L32 35z" fill="#fafafa" stroke="#777" strokeWidth="2" />
          <path d="M18 43c1-6 7-11 12-10l3 3c-1 5-9 9-15 7z" fill="#6db4ec" stroke={BLUE} />
        </Ic>
      </SideButton>
      <SideButton className="-mt-[3px] pt-[4px]">
        <Ic>
          <path d="M2 35V5h14l5 5h20v8" fill="#f6f5f4" stroke={ORANGE} strokeWidth="2" />
          <path d="M2 35l5-17h40l-8 17z" fill={SAND} stroke={ORANGE} strokeWidth="2" />
          <rect x="18" y="20" width="27" height="21" fill="#fafafa" stroke="#555" strokeWidth="2.500" />
          <path d="M20 40l6-7 6 2 4-3 8 4v4z" fill="#84bfee" />
          <circle cx="24" cy="26" r="2.500" fill={ORANGE} />
        </Ic>
      </SideButton>
      <SideButton active>
        <Ic>
          <circle cx="24" cy="24" r="19" fill="#fafafa" stroke="#666" strokeWidth="2.500" />
          <path d="M35 12L27 28l-15 8 8-16z" fill={BLUE} />
          <circle cx="24" cy="24" r="2.500" fill="#fafafa" />
        </Ic>
      </SideButton>
      <div className="h-[52px] mt-[6px] ml-[3px] flex items-center font-['Liberation_Serif',serif] italic font-bold text-[48px] text-[#3d9ad8]">fx</div>
    </div>
    {/* deck collapse handle */}
    <div className="absolute -left-[2px] top-[679px] w-[15px] h-[146px] bg-[#909394] flex items-center justify-center">
      <svg viewBox="0 0 10 12" className="w-[10px] h-[12px]"><path d="M0 0l10 6L0 12z" fill="#fff" /></svg>
    </div>
  </div>
);

const StatusCell = ({ className = '', children }: { className?: string; children?: React.ReactNode }) => (
  <div className={`h-[32px] shrink-0 flex items-center border-l-2 border-[#dadada] ${className}`}>{children}</div>
);

const StatusBar = () => (
  <div className="h-[46px] shrink-0 flex items-center border-t-[3px] border-[#b5b5b0] text-[23px] text-[#2e3436] whitespace-nowrap">
    <div className="w-[242px] shrink-0" />
    <StatusCell className="w-[231px]" />
    <StatusCell className="w-[195px] pl-[17px]"><span className="mt-[2px]">Default</span></StatusCell>
    <StatusCell className="w-[264px] pl-[59px]"><span className="mt-[2px]">English (USA)</span></StatusCell>
    <StatusCell className="w-[137px]" />
    <StatusCell className="w-[57px] justify-center">
      <svg viewBox="0 0 34 22" fill="none" className="w-[34px] h-[22px]">
        <rect x="1" y="6" width="18" height="11" stroke="#555" strokeWidth="2.500" />
        <path d="M24 1h8M28 1v20M24 21h8" stroke="#555" strokeWidth="2" />
      </svg>
    </StatusCell>
    <StatusCell className="w-[57px] justify-center">
      <svg viewBox="0 0 20 20" fill="none" className="w-[20px] h-[20px]">
        <path d="M1 1h18v18H1z" stroke="#e5383b" strokeWidth="2.500" />
        <path d="M5 1v6h10V1M5 19v-7h10v7" stroke="#e5383b" strokeWidth="2.500" />
      </svg>
    </StatusCell>
    <StatusCell className="w-[59px]" />
    <StatusCell className="w-[521px] pl-[18px]">
      <svg viewBox="0 0 32 24" fill="none" className="w-[32px] h-[24px] shrink-0">
        <rect x="6" y="6" width="25" height="16" stroke="#555" strokeWidth="2" fill="#f6f5f4" />
        <path d="M6 0v12M0 6h12" stroke="#3d9ad8" strokeWidth="2" />
      </svg>
      <span className="ml-[9px] mt-[2px]">9.38 / 1.57</span>
      <svg viewBox="0 0 32 28" fill="none" className="ml-[100px] w-[32px] h-[28px] shrink-0">
        <rect x="10" y="8" width="21" height="13" stroke="#555" strokeWidth="2" />
        <path d="M10 1v8M31 1v8M10 4h21M0 25h10M0 14h10M5 14v11" stroke="#3d9ad8" strokeWidth="2" />
      </svg>
      <span className="ml-[11px] mt-[2px]">6.49 x 4.06</span>
    </StatusCell>
    <StatusCell className="w-[286px] pl-[18px]">
      <div className="w-[16px] h-[4px] bg-[#333] shrink-0" />
      <div className="relative ml-[16px] w-[193px] h-[3px] bg-[#9a9a9a] shrink-0">
        <div className="absolute left-[73px] -top-[9px] w-[8px] h-[20px] rounded-[2px] bg-[#f6f5f4] border-2 border-[#555]" />
        <div className="absolute left-[93px] -top-[4px] w-[2px] h-[10px] bg-[#bbb]" />
      </div>
      <svg viewBox="0 0 18 18" className="ml-[12px] w-[18px] h-[18px] shrink-0"><path d="M9 0v18M0 9h18" stroke="#333" strokeWidth="3" /></svg>
    </StatusCell>
    <StatusCell className="flex-1 pl-[14px] text-[25px]"><span className="mt-[2px]">88%</span></StatusCell>
  </div>
);

export default function App() {
  return (
    <div className="w-[2240px] h-[1954px] overflow-hidden bg-white pt-[45px] pl-[51px] font-['Noto_Sans',sans-serif] text-[28px]">
      <div className="w-[2138px] h-[1851px] flex flex-col rounded-t-[14px] bg-[#f6f5f4] shadow-[0_0_0_1px_#9e9e9e,0_8px_32px_rgba(0,0,0,0.4)]">
        {/* titlebar */}
        <div className="relative h-[74px] shrink-0 flex items-center justify-center pb-[2px] rounded-t-[14px] bg-gradient-to-b from-[#e3e0dd] to-[#dbd8d3] border-t-2 border-white/70 border-b-[3px] border-b-[#bfb8b1]">
          <span className="font-semibold text-[#2e3436] whitespace-nowrap">ExampleCalc.ods - LibreOfficeDev Calc</span>
          <div className="absolute right-[30px] top-[29px] flex items-center gap-[54px]">
            <div className="w-[14px] h-[16px] border-[4px] border-[#2e3436]" />
            <CloseX />
          </div>
        </div>
        {/* menu bar */}
        <div className="h-[53px] shrink-0 flex items-center text-[#2e3436]">
          <div className="w-[2081px] h-full flex items-center gap-[33px] pl-[17px] pt-[6px] border-b-[3px] border-[#dedcd9]">
            {menus.map(([before, u, rest]) => (
              <span key={before + u + rest}>
                {before}
                <u>{u}</u>
                {rest}
              </span>
            ))}
          </div>
          <CloseX className="ml-[13px]" />
        </div>
        <Toolbar1 />
        <Toolbar2 />
        {/* document + sidebar */}
        <div className="flex-1 flex min-h-0">
          <div className="w-[2020px] shrink-0 flex flex-col relative">
            <FormulaBar />
            <Sheet />
            <HScroll />
            <SheetTabs />
            <div className="relative h-[2px] shrink-0 bg-[#b5b5b5]">
              <div className="absolute left-[937px] -top-[11px] w-[146px] h-[11px] bg-[#909394] flex items-start justify-center">
                <svg viewBox="0 0 14 9" className="w-[14px] h-[9px]"><path d="M0 0h14L7 9z" fill="#fff" /></svg>
              </div>
            </div>
            {/* development tools */}
            <div className="flex-1 flex pl-[37px]">
              <ObjectPanel />
              <div className="ml-[13px] mt-[12px] h-[806px] w-[11px] shrink-0 border-x-2 border-[#cfcfcf]" />
              <div className="ml-[11px] min-w-0"><Inspector /></div>
            </div>
          </div>
          <Sidebar />
        </div>
        <StatusBar />
      </div>
    </div>
  );
}
